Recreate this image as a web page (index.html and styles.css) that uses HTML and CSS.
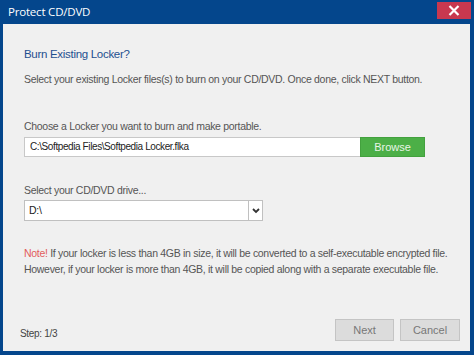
FILE: index.html
```html
<!DOCTYPE html>
<html lang="en">
<head>
  <meta charset="UTF-8" />
  <title>Protect CD/DVD</title>
  <link rel="stylesheet" href="styles.css">
</head>
<body>
  <div class="window">
    <div class="titlebar">
      <span class="title">Protect CD/DVD</span>
      <div class="close-btn">
        <svg width="12" height="11" viewBox="0 0 12 11"><path d="M1.5 1 L10.5 10 M10.5 1 L1.5 10" stroke="#fff" stroke-width="2.2"/></svg>
      </div>
    </div>

    <div class="content">
      <h1 class="heading">Burn Existing Locker?</h1>
      <p class="desc">Select your existing Locker files(s) to burn on your CD/DVD. Once done, click NEXT button.</p>

      <label class="label first">Choose a Locker you want to burn and make portable.</label>
      <div class="file-row">
        <div class="file-input">C:\Softpedia Files\Softpedia Locker.flka</div>
        <div class="browse-btn">Browse</div>
      </div>

      <label class="label second">Select your CD/DVD drive...</label>
      <div class="drive-select">
        <span class="drive-value">D:\</span>
        <span class="drive-arrow">
          <svg width="8" height="6" viewBox="0 0 8 6"><path d="M1 1 L4 4 L7 1" stroke="#333" stroke-width="1.8" fill="none"/></svg>
        </span>
      </div>

      <p class="note"><span class="note-tag">Note!</span> If your locker is less than 4GB in size, it will be converted to a self-executable encrypted file.<br>However, if your locker is more than 4GB, it will be copied along with a separate executable file.</p>

      <div class="footer">
        <span class="step">Step: 1/3</span>
        <div class="buttons">
          <div class="btn">Next</div>
          <div class="btn">Cancel</div>
        </div>
      </div>
    </div>
  </div>
</body>
</html>
```

FILE: styles.css
```css
body {
  margin: 0;
  padding: 0;
  font-family: "Liberation Sans", Arial, sans-serif;
  background: #04468c;
}

.window {
  width: 474px;
  height: 355px;
  background: #04468c;
  padding: 0 4px 4px 3px;
  box-sizing: border-box;
  display: flex;
  flex-direction: column;
}

.titlebar {
  height: 24px;
  display: flex;
  align-items: center;
  justify-content: space-between;
  flex-shrink: 0;
}

.title {
  color: #fff;
  font-family: "Open Sans", "Liberation Sans", sans-serif;
  font-size: 11.5px;
  letter-spacing: -0.2px;
  padding-left: 5px;
  padding-bottom: 1px;
}

.close-btn {
  width: 34px;
  height: 17px;
  margin-right: -1px;
  margin-bottom: 4px;
  background: #c8384f;
  display: flex;
  align-items: center;
  justify-content: center;
}

.content {
  flex: 1;
  background: #f0f0f0;
  padding: 0 0 0 21px;
  display: flex;
  flex-direction: column;
  color: #555;
  font-size: 10.5px;
  letter-spacing: -0.3px;
}

.heading {
  margin: 23px 0 0;
  font-size: 11.5px;
  font-weight: normal;
  line-height: 14px;
  color: #1e4f8f;
}

.desc {
  margin: 11px 0 0;
  line-height: 14px;
  white-space: nowrap;
}

.label {
  display: block;
  line-height: 14px;
}

.label.first {
  margin-top: 33px;
}

.label.second {
  margin-top: 26px;
}

.file-row {
  display: flex;
  margin-top: 4px;
  height: 20px;
}

.file-input {
  width: 336px;
  background: #fff;
  border: 1px solid #c8c8c8;
  border-right: none;
  box-sizing: border-box;
  padding-left: 5px;
  line-height: 18px;
  color: #222;
  font-size: 10px;
  letter-spacing: -0.4px;
}

.browse-btn {
  width: 65px;
  background: #4caf47;
  border: 1px solid #43a13e;
  box-sizing: border-box;
  color: #e8f5e6;
  text-align: center;
  line-height: 18px;
  font-size: 11px;
  letter-spacing: 0;
}

.drive-select {
  margin-top: 3px;
  width: 239px;
  height: 21px;
  background: #fff;
  border: 1px solid #c0c0c0;
  box-sizing: border-box;
  display: flex;
  justify-content: space-between;
}

.drive-value {
  padding-left: 4px;
  line-height: 19px;
  color: #222;
}

.drive-arrow {
  width: 13px;
  border-left: 1px solid #c0c0c0;
  display: flex;
  align-items: center;
  justify-content: center;
}

.note {
  margin: 24px 0 0;
  line-height: 16px;
  white-space: nowrap;
}

.note-tag {
  color: #e25c5c;
}

.footer {
  margin-top: auto;
  margin-bottom: 10px;
  margin-left: -4px;
  display: flex;
  justify-content: space-between;
  align-items: center;
}

.step {
  font-size: 10px;
  color: #444;
  padding-top: 6px;
}

.buttons {
  display: flex;
  gap: 6px;
  margin-right: 10px;
}

.btn {
  width: 59px;
  height: 22px;
  background: #dcdcdc;
  border: 1px solid #c4c4c4;
  box-sizing: border-box;
  color: #777;
  text-align: center;
  line-height: 20px;
  font-size: 11px;
  letter-spacing: 0;
}

.buttons .btn:last-child {
  width: 60px;
}
```
